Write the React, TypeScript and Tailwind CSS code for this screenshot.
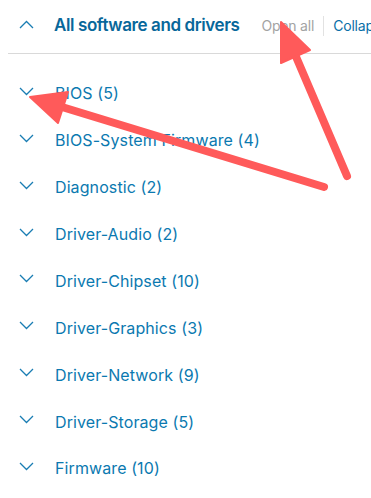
import React from "react";

const rows = [
  "BIOS (5)",
  "BIOS-System Firmware (4)",
  "Diagnostic (2)",
  "Driver-Audio (2)",
  "Driver-Chipset (10)",
  "Driver-Graphics (3)",
  "Driver-Network (9)",
  "Driver-Storage (5)",
  "Firmware (10)",
];

function Chevron({ up }: { up?: boolean }) {
  return (
    <svg width="15" height="9" viewBox="0 0 15 9" className="shrink-0">
      <polyline
        points={up ? "1,8 7.5,1.5 14,8" : "1,1 7.5,7.5 14,1"}
        fill="none"
        stroke="#1a7db3"
        strokeWidth="1.3"
      />
    </svg>
  );
}

export default function App() {
  return (
    <div
      className="relative w-[371px] h-[498px] overflow-hidden bg-white"
      style={{ fontFamily: "Inter, 'Open Sans', sans-serif" }}
    >
      <div className="ml-[8px] h-[54px] border-b border-[#d9d9d9] flex items-center whitespace-nowrap pb-[2px]">
        <div className="pl-[11px] w-[46px] shrink-0 flex items-center pb-[2px]">
          <Chevron up />
        </div>
        <div className="shrink-0 text-[17px] font-semibold tracking-[-0.4px] text-[#08679a]">
          All software and drivers
        </div>
        <div className="shrink-0 ml-[22px] text-[14px] text-[#a3a3a3] tracking-[-0.2px]">Open all</div>
        <div className="shrink-0 ml-[9px] w-px h-[20px] bg-[#e2e2e2]" />
        <div className="shrink-0 ml-[9px] text-[14px] text-[#0a6fa8] tracking-[-0.2px]">Collapse all</div>
      </div>
      <div className="pt-[16px]">
        {rows.map((r) => (
          <div key={r} className="h-[46.875px] flex items-center whitespace-nowrap">
            <div className="pl-[19px] w-[55px] shrink-0 flex items-center pb-[4px]">
              <Chevron />
            </div>
            <div className="text-[16px] text-[#0b79b0] tracking-[0.1px]">{r}</div>
          </div>
        ))}
      </div>
      <svg
        className="absolute inset-0 pointer-events-none"
        width="371"
        height="498"
        viewBox="0 0 371 498"
      >
        <g fill="#ff5a5a" stroke="#ff5a5a" strokeLinecap="round" strokeLinejoin="round">
          <line x1="347" y1="176" x2="294" y2="52" strokeWidth="8" />
          <polygon points="281,22 310,50 281,63" strokeWidth="2" />
          <line x1="324" y1="187" x2="62" y2="107" strokeWidth="8" />
          <polygon points="30,97 68,92 58,123" strokeWidth="2" />
        </g>
      </svg>
    </div>
  );
}
